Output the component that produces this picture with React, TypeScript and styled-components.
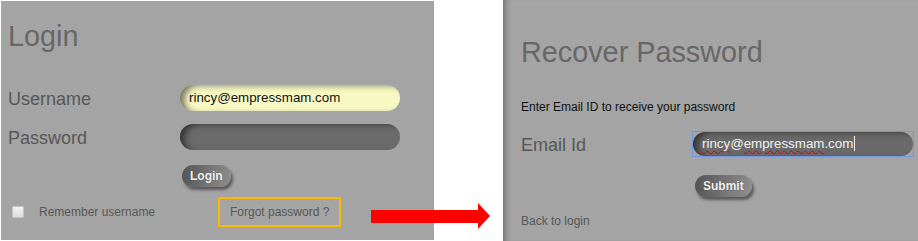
import * as React from 'react';
import styled, { createGlobalStyle } from 'styled-components';

const GlobalStyle = createGlobalStyle`
  html, body {
    margin: 0;
    padding: 0;
    background: #ffffff;
  }
  body {
    font-family: 'Liberation Sans', Arial, sans-serif;
  }
`;

const panelGray = '#a4a4a4';

const Stage = styled.div`
  position: relative;
  display: flex;
  align-items: flex-start;
  width: 918px;
  height: 241px;
  overflow: hidden;
`;

const Panel = styled.div<{ $width: number; $height: number; $edge?: boolean }>`
  box-sizing: border-box;
  width: ${(p) => p.$width}px;
  height: ${(p) => p.$height}px;
  background: ${panelGray};
  display: flex;
  flex-direction: column;
  box-shadow: ${(p) => (p.$edge ? 'inset 7px 0 6px -5px rgba(0, 0, 0, 0.35)' : 'none')};
`;

const LoginPanel = styled(Panel)`
  margin: 1px 0 0 1px;
  padding: 19px 0 0 7px;
`;

const RecoverPanel = styled(Panel)`
  margin-left: 69px;
  padding: 36px 0 0 18px;
`;

const Title = styled.h1`
  margin: 0;
  font-size: 28.8px;
  line-height: 33px;
  font-weight: normal;
  color: #676767;
`;

const FieldRow = styled.div<{ $top: number }>`
  display: flex;
  align-items: center;
  margin-top: ${(p) => p.$top}px;
`;

const Label = styled.label`
  box-sizing: border-box;
  width: 172px;
  height: 26px;
  font-size: 18px;
  line-height: 24px;
  padding-top: 2px;
  color: #575757;
`;

const Field = styled.div<{ $fill: string; $ink: string }>`
  box-sizing: border-box;
  width: 220px;
  height: 26px;
  border-radius: 13px;
  background: ${(p) => p.$fill};
  color: ${(p) => p.$ink};
  font-size: 13.33px;
  line-height: 26px;
  padding-left: 9px;
  white-space: nowrap;
  box-shadow: inset 6px 2px 7px -2px rgba(0, 0, 0, 0.55);
`;

const FocusRing = styled.div`
  border: 1px solid #6d97e0;
  margin-left: -1px;
  display: flex;
`;

const FocusField = styled(Field)`
  height: 24px;
  line-height: 24px;
  border-radius: 12px;
`;

const Misspelled = styled.span`
  text-decoration: underline wavy #e00000;
  text-decoration-thickness: 1px;
  text-underline-offset: 2px;
`;

const Caret = styled.span`
  display: inline-block;
  width: 1px;
  height: 15px;
  margin-left: 1px;
  vertical-align: -3px;
  background: #f4f4f4;
`;

const ButtonRow = styled.div<{ $top: number }>`
  margin-top: ${(p) => p.$top}px;
  padding-left: ${(p) => 172 + 2}px;
  display: flex;
`;

const PillButton = styled.button`
  height: 22px;
  padding: 0 8px;
  border: none;
  border-radius: 11px;
  font-family: 'Liberation Sans', Arial, sans-serif;
  font-size: 12px;
  font-weight: bold;
  color: #f0f0f0;
  text-shadow: 0 0 1px rgba(0, 0, 0, 0.4);
  background: linear-gradient(100deg, #535353 0%, #767676 55%, #8e8e8e 100%);
  box-shadow: 2px 3px 3px rgba(0, 0, 0, 0.45);
`;

const OptionsRow = styled.div`
  display: flex;
  align-items: center;
  margin-top: 10px;
`;

const Remember = styled.div`
  box-sizing: border-box;
  display: flex;
  align-items: center;
  width: 210px;
  padding-left: 4px;
  font-size: 12px;
  color: #575757;
`;

const CheckBox = styled.span`
  box-sizing: border-box;
  width: 12px;
  height: 12px;
  margin-right: 15px;
  background: linear-gradient(#f2f2f2, #dcdcdc);
  border: 1px solid #c4c4c4;
  border-radius: 1px;
`;

const ForgotLink = styled.a`
  box-sizing: border-box;
  height: 30px;
  padding: 0 10px 0 10px;
  display: flex;
  align-items: center;
  border: 2px solid #f9b900;
  font-size: 12px;
  color: #575757;
  text-decoration: none;
`;

const Hint = styled.p`
  margin: 31px 0 0;
  font-size: 12px;
  line-height: 14px;
  color: #111111;
`;

const BackLink = styled.a`
  margin-top: 17px;
  font-size: 12px;
  line-height: 14px;
  color: #575757;
  text-decoration: none;
`;

const Arrow = styled.svg`
  position: absolute;
  left: 371px;
  top: 203px;
`;

const App: React.FC = () => {
  return (
    <Stage>
      <GlobalStyle />

      {/* LOGIN */}
      <LoginPanel $width={433} $height={239}>
        <Title>Login</Title>
        <FieldRow $top={32}>
          <Label>Username</Label>
          <Field $fill="#f8f8c4" $ink="#111">rincy@empressmam.com</Field>
        </FieldRow>
        <FieldRow $top={13}>
          <Label>Password</Label>
          <Field $fill="#6b6b6b" $ink="#eee" />
        </FieldRow>
        <ButtonRow $top={15}>
          <PillButton>Login</PillButton>
        </ButtonRow>
        <OptionsRow>
          <Remember>
            <CheckBox />
            Remember username
          </Remember>
          <ForgotLink href="#">Forgot password ?</ForgotLink>
        </OptionsRow>
      </LoginPanel>

      {/* RECOVER */}
      <RecoverPanel $width={415} $height={241} $edge>
        <Title>Recover Password</Title>
        <Hint>Enter Email ID to receive your password</Hint>
        <FieldRow $top={17}>
          <Label>Email Id</Label>
          <FocusRing>
            <FocusField $fill="#6a6a6a" $ink="#f0f0f0">
              <Misspelled>rincy</Misspelled>@<Misspelled>empressmam</Misspelled>.com
              <Caret />
            </FocusField>
          </FocusRing>
        </FieldRow>
        <ButtonRow $top={18}>
          <PillButton>Submit</PillButton>
        </ButtonRow>
        <BackLink href="#">Back to login</BackLink>
      </RecoverPanel>

      <Arrow width={119} height={26} viewBox="0 0 119 26">
        <polygon points="0,7 107,7 107,0 119,13 107,26 107,20 0,20" fill="#ff0000" />
      </Arrow>
    </Stage>
  );
};

export default App;
